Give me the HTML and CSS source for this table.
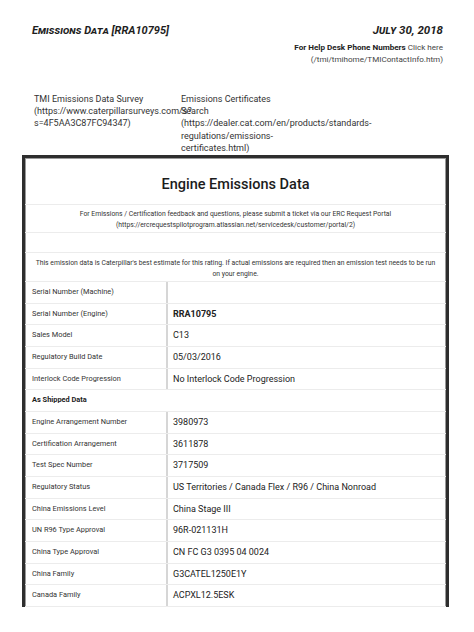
FILE: index.html
```html
<!DOCTYPE html>
<html>
<head>
<meta charset="utf-8">
<link rel="stylesheet" href="styles.css">
</head>
<body>
<div class="page">
  <header class="head">
    <div class="head-row">
      <h1 class="doc-title">Emissions Data [RRA10795]</h1>
      <div class="doc-date">July 30, 2018</div>
    </div>
    <p class="help"><b>For Help Desk Phone Numbers</b> Click here<br>(/tmi/tmihome/TMIContactInfo.htm)</p>
  </header>

  <section class="links">
    <div class="link-col">TMI Emissions Data Survey (https://www.caterpillarsurveys.com/s?s=4F5AA3C87FC94347)</div>
    <div class="link-col">Emissions Certificates Search (https://dealer.cat.com/en/products/standards-regulations/emissions-certificates.html)</div>
  </section>

  <section class="sheet">
    <h2 class="sheet-title">Engine Emissions Data</h2>
    <p class="note note-erc">For Emissions / Certification feedback and questions, please submit a ticket via our ERC Request Portal<br>(https://ercrequestspilotprogram.atlassian.net/servicedesk/customer/portal/2)</p>
    <div class="blank"></div>
    <p class="note note-disc">This emission data is Caterpillar's best estimate for this rating. If actual emissions are required then an emission test needs to be run on your engine.</p>

    <div class="row"><div class="lbl">Serial Number (Machine)</div><div class="val"></div></div>
    <div class="row"><div class="lbl">Serial Number (Engine)</div><div class="val bold">RRA10795</div></div>
    <div class="row"><div class="lbl">Sales Model</div><div class="val">C13</div></div>
    <div class="row"><div class="lbl">Regulatory Build Date</div><div class="val">05/03/2016</div></div>
    <div class="row"><div class="lbl">Interlock Code Progression</div><div class="val">No Interlock Code Progression</div></div>
    <div class="row section"><div class="lbl">As Shipped Data</div></div>
    <div class="row"><div class="lbl">Engine Arrangement Number</div><div class="val">3980973</div></div>
    <div class="row"><div class="lbl">Certification Arrangement</div><div class="val">3611878</div></div>
    <div class="row"><div class="lbl">Test Spec Number</div><div class="val">3717509</div></div>
    <div class="row"><div class="lbl">Regulatory Status</div><div class="val">US Territories / Canada Flex / R96 / China Nonroad</div></div>
    <div class="row"><div class="lbl">China Emissions Level</div><div class="val">China Stage III</div></div>
    <div class="row"><div class="lbl">UN R96 Type Approval</div><div class="val">96R-021131H</div></div>
    <div class="row"><div class="lbl">China Type Approval</div><div class="val">CN FC G3 0395 04 0024</div></div>
    <div class="row"><div class="lbl">China Family</div><div class="val">G3CATEL1250E1Y</div></div>
    <div class="row"><div class="lbl">Canada Family</div><div class="val">ACPXL12.5ESK</div></div>
  </section>
</div>
</body>
</html>
```

FILE: styles.css
```css
* { box-sizing: border-box; }
html, body { margin: 0; padding: 0; background: #fff; }
body {
  width: 474px;
  height: 632px;
  overflow: hidden;
  font-family: Roboto, "Liberation Sans", sans-serif;
  color: #2b2b2b;
}
.page { padding: 22px 25px 0 22px; }

.head { padding: 0 6px 0 10px; }
.head-row { display: flex; justify-content: space-between; align-items: baseline; }
.doc-title, .doc-date {
  margin: 0;
  font-size: 11px;
  line-height: 16px;
  font-weight: 700;
  font-style: italic;
  font-variant: small-caps;
  color: #1e1e1e;
}
.doc-date { font-size: 11.5px; }
.help {
  margin: 2px 0 0;
  text-align: right;
  font-size: 8.1px;
  line-height: 12px;
  color: #444;
}
.help b { color: #222; }

.links {
  display: grid;
  grid-template-columns: 110px 110px;
  column-gap: 37px;
  margin: 28px 0 0 12px;
  font-size: 9px;
  line-height: 12.2px;
  color: #333;
}

.sheet {
  margin-top: 1px;
  border: 3px solid #2e2e2e;
  border-bottom: 0;
  box-shadow: inset 1px 1px 0 #9a9a9a, inset -1px 0 0 #9a9a9a;
}
.sheet-title {
  margin: 0;
  height: 47px;
  padding-top: 18px;
  text-align: center;
  font-size: 14.5px;
  line-height: 18px;
  font-weight: 500;
  color: #1c1c1c;
  border-bottom: 1px solid #ececec;
}
.note {
  margin: 0;
  text-align: center;
  font-size: 6.8px;
  line-height: 11px;
  color: #333;
  border-bottom: 1px solid #ececec;
}
.note-erc { height: 28px; padding-top: 4px; }
.blank { height: 20px; border-bottom: 1px solid #ececec; }
.note-disc { height: 29px; padding: 5px 8px 0; }

.row {
  display: flex;
  height: 21.67px;
  border-bottom: 1px solid #ececec;
}
.lbl {
  width: 143px;
  flex: none;
  padding: 5px 0 0 7px;
  font-size: 7.4px;
  line-height: 10px;
  color: #333;
  border-right: 2px solid #d6d6d6;
}
.val {
  flex: 1;
  padding: 4px 0 0 5px;
  font-size: 9px;
  line-height: 13px;
  color: #222;
}
.val.bold { font-weight: 700; }
.section .lbl { border-right: 0; width: auto; font-weight: 700; color: #222; }
```
